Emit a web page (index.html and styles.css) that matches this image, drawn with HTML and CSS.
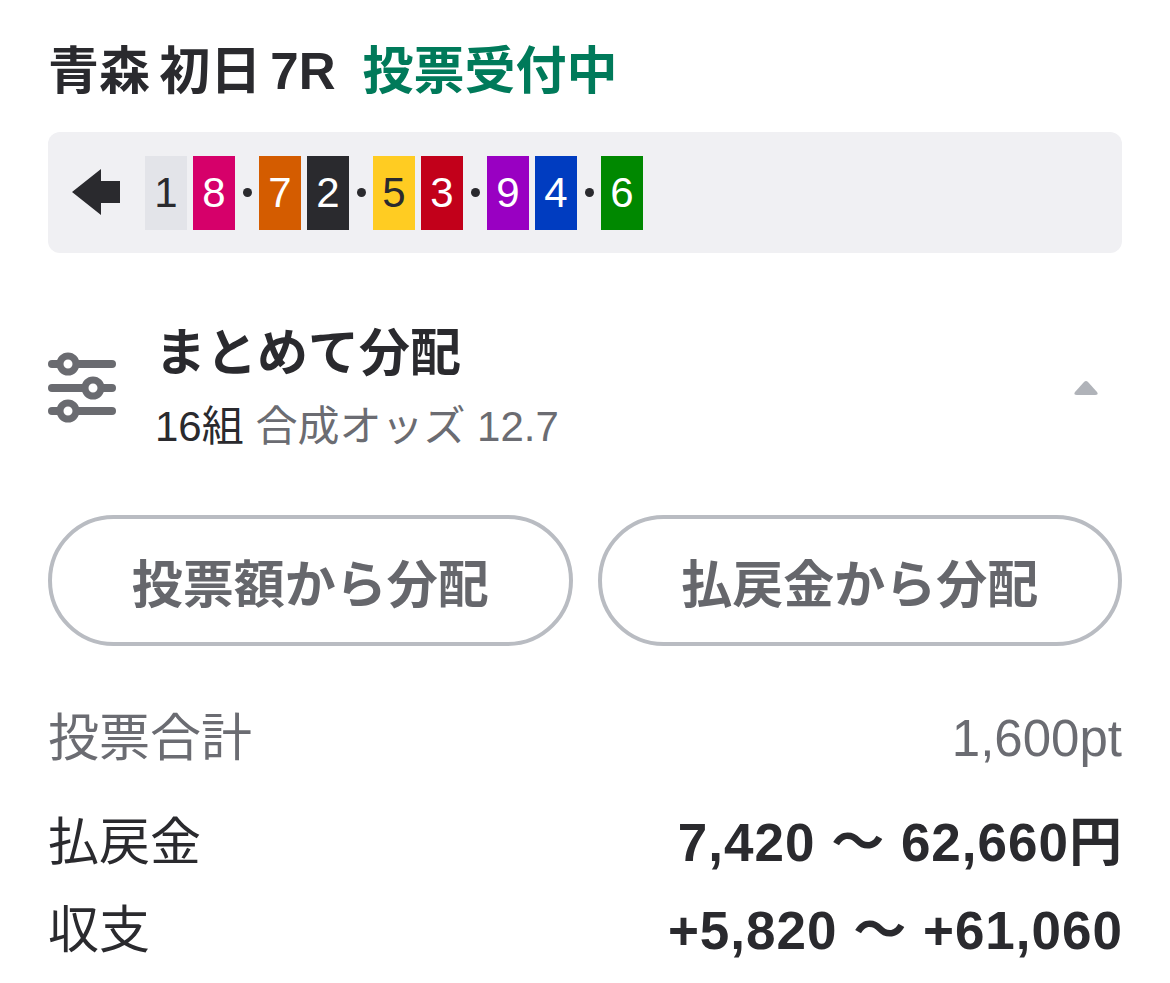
FILE: index.html
```html
<!DOCTYPE html>
<html lang="ja">
<head>
<meta charset="utf-8">
<link rel="stylesheet" href="styles.css">
</head>
<body>
<div class="page">
  <h1 class="title"><span class="race">青森 初日 7R</span><span class="status">投票受付中</span></h1>

  <div class="combo-bar">
    <svg class="back" width="48" height="46" viewBox="0 0 48 46"><path d="M0 23 L29 0 V12 H48 V34 H29 V46 Z" fill="#2a2a2e"/></svg>
    <div class="nums">
      <span class="n n1">1</span>
      <span class="n n8">8</span>
      <span class="dot"></span>
      <span class="n n7">7</span>
      <span class="n n2">2</span>
      <span class="dot"></span>
      <span class="n n5">5</span>
      <span class="n n3">3</span>
      <span class="dot"></span>
      <span class="n n9">9</span>
      <span class="n n4">4</span>
      <span class="dot"></span>
      <span class="n n6">6</span>
    </div>
  </div>

  <div class="section">
    <svg class="sliders" width="68" height="72" viewBox="0 0 68 72">
      <g stroke="#6a6b70" stroke-width="8" stroke-linecap="round">
        <line x1="4" y1="12" x2="64" y2="12"/>
        <line x1="4" y1="36" x2="64" y2="36"/>
        <line x1="4" y1="59" x2="64" y2="59"/>
      </g>
      <g stroke="#6a6b70" stroke-width="7" fill="#fff">
        <circle cx="20" cy="12" r="8"/>
        <circle cx="45" cy="36" r="8"/>
        <circle cx="20" cy="59" r="8"/>
      </g>
    </svg>
    <div class="section-text">
      <div class="section-title">まとめて分配</div>
      <div class="section-sub"><span class="count">16組</span> 合成オッズ 12.7</div>
    </div>
    <svg class="caret" width="26" height="16" viewBox="0 0 26 16"><path d="M11 2 Q13 0 15 2 L24 12 Q26 15 22 15 H4 Q0 15 2 12 Z" fill="#b0b3b9"/></svg>
  </div>

  <div class="buttons">
    <button class="btn">投票額から分配</button>
    <button class="btn">払戻金から分配</button>
  </div>

  <div class="summary">
    <div class="row total"><span class="label">投票合計</span><span class="value">1,600pt</span></div>
    <div class="row"><span class="label">払戻金</span><span class="value strong">7,420 〜 62,660円</span></div>
    <div class="row"><span class="label">収支</span><span class="value strong">+5,820 〜 +61,060</span></div>
  </div>
</div>
</body>
</html>
```

FILE: styles.css
```css
* { box-sizing: border-box; }
html, body { margin: 0; padding: 0; background: #fff; }
body {
  font-family: "Liberation Sans", "Noto Sans CJK JP", sans-serif;
  color: #2a2a2e;
}
.page {
  width: 1170px;
  padding: 36px 48px 0 48px;
}
.title {
  margin: 0;
  font-size: 51px;
  line-height: 72px;
  font-weight: 700;
  display: flex;
  gap: 27px;
}
.race { color: #2a2a2e; word-spacing: -5px; }
.status { color: #007a5a; }

.combo-bar {
  margin-top: 24px;
  height: 121px;
  background: #f0f0f3;
  border-radius: 12px;
  display: flex;
  align-items: center;
  padding-left: 24px;
}
.back { flex: none; margin-right: 25px; margin-top: -2px; }
.nums {
  display: flex;
  align-items: center;
  gap: 6px;
}
.n {
  width: 42px;
  height: 74px;
  display: flex;
  align-items: center;
  justify-content: center;
  font-family: "Liberation Sans", sans-serif;
  font-size: 42px;
  color: #fff;
}
.n1 { background: #e3e4e9; color: #2a2a2e; }
.n8 { background: #d6006a; }
.n7 { background: #d45c00; }
.n2 { background: #2a2a2e; }
.n5 { background: #ffcc22; color: #2a2a2e; }
.n3 { background: #c2001a; }
.n9 { background: #9900c2; }
.n4 { background: #003cc0; }
.n6 { background: #008800; }
.dot {
  width: 12px;
  display: flex;
  justify-content: center;
}
.dot::before {
  content: "";
  width: 9px;
  height: 9px;
  border-radius: 50%;
  background: #2a2a2e;
}

.section {
  margin-top: 71px;
  display: flex;
  align-items: center;
}
.sliders { flex: none; margin-right: 39px; }
.section-text { flex: 1; }
.section-title {
  font-size: 51px;
  line-height: 60px;
  font-weight: 700;
  color: #2a2a2e;
}
.section-sub {
  margin-top: 18px;
  font-size: 42px;
  line-height: 50px;
  color: #6b6c72;
}
.count { color: #2a2a2e; }
.caret { flex: none; margin-right: 23px; }

.buttons {
  margin-top: 63px;
  display: flex;
  gap: 25px;
}
.btn {
  flex: 1;
  height: 131px;
  border: 4px solid #b9bcc2;
  border-radius: 66px;
  background: #fff;
  font-family: "Liberation Sans", "Noto Sans CJK JP", sans-serif;
  font-size: 51px;
  font-weight: 700;
  color: #66676c;
  padding: 0;
}

.summary {
  margin-top: 61px;
  display: flex;
  flex-direction: column;
  gap: 24px;
}
.row {
  display: flex;
  justify-content: space-between;
  align-items: center;
  font-size: 51px;
  line-height: 64px;
}
.row.total { margin-bottom: 16px; color: #6b6c72; }
.value.strong {
  font-weight: 700;
  font-size: 53px;
  letter-spacing: 1px;
  margin-right: -1px;
}
```
